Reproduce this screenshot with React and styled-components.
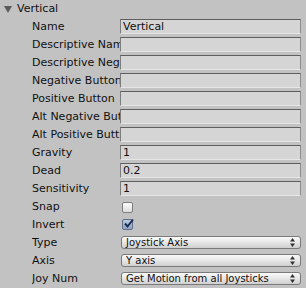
import React from "react";
import styled, { createGlobalStyle } from "styled-components";

const GlobalStyle = createGlobalStyle`
  body {
    margin: 0;
    background: #c2c2c2;
    font-family: "DejaVu Sans", Verdana, sans-serif;
    font-size: 11px;
    color: #111;
  }
`;

const Panel = styled.div`
  width: 306px;
  height: 288px;
  overflow: hidden;
  background: #c2c2c2;
`;

const Header = styled.div`
  display: flex;
  align-items: center;
  height: 18px;
  padding-left: 4px;
  gap: 5px;
`;

const Foldout = styled.span`
  width: 0;
  height: 0;
  border-left: 4px solid transparent;
  border-right: 4px solid transparent;
  border-top: 7px solid #5a5a5a;
  margin-top: 1px;
`;

const Title = styled.span`
  line-height: 18px;
`;

const Row = styled.div`
  display: flex;
  align-items: flex-start;
  height: 18px;
`;

const Label = styled.div`
  width: 88px;
  margin-left: 32px;
  line-height: 17px;
  white-space: nowrap;
  overflow: hidden;
`;

const TextField = styled.div`
  box-sizing: border-box;
  width: 181px;
  height: 15px;
  margin-top: 1px;
  padding-left: 2px;
  background: #d5d5d5;
  border-top: 1px solid #5e5e5e;
  border-left: 1px solid #7c7c7c;
  border-right: 1px solid #8e8e8e;
  border-bottom: 1px solid #e6e6e6;
  line-height: 13px;
  white-space: nowrap;
  overflow: hidden;
`;

const CheckBox = styled.div`
  box-sizing: border-box;
  width: 11px;
  height: 11px;
  margin: ${(p) => (p.$checked ? "3px" : "4px")} 0 0 2px;
  border: 1px solid ${(p) => (p.$checked ? "#5d6f8c" : "#7d7d7d")};
  border-radius: 2px;
  background: ${(p) =>
    p.$checked
      ? "linear-gradient(#b9c9e0, #8ea4c4)"
      : "linear-gradient(#fbfbfb, #dcdcdc)"};
  position: relative;
  svg {
    position: absolute;
    left: 0;
    top: -2px;
  }
`;

const Popup = styled.div`
  box-sizing: border-box;
  display: flex;
  align-items: center;
  justify-content: space-between;
  width: 180px;
  height: 13px;
  margin: 2px 0 0 1px;
  padding: 0 5px 0 4px;
  border: 1px solid #7a7a7a;
  border-radius: 3px;
  background: linear-gradient(#fafafa, #e4e4e4 55%, #cfcfcf);
  font-size: 10px;
  line-height: 11px;
  white-space: nowrap;
`;

const Arrows = styled.svg`
  flex: none;
`;

const fields = [
  ["Name", "Vertical"],
  ["Descriptive Name", ""],
  ["Descriptive Negative Name", ""],
  ["Negative Button", ""],
  ["Positive Button", ""],
  ["Alt Negative Button", ""],
  ["Alt Positive Button", ""],
  ["Gravity", "1"],
  ["Dead", "0.2"],
  ["Sensitivity", "1"],
];

const popups = [
  ["Type", "Joystick Axis"],
  ["Axis", "Y axis"],
  ["Joy Num", "Get Motion from all Joysticks"],
];

export default function App() {
  return (
    <Panel>
      <GlobalStyle />
      <Header>
        <Foldout />
        <Title>Vertical</Title>
      </Header>
      {fields.map(([label, value]) => (
        <Row key={label}>
          <Label>{label}</Label>
          <TextField>{value}</TextField>
        </Row>
      ))}
      <Row>
        <Label>Snap</Label>
        <CheckBox />
      </Row>
      <Row>
        <Label>Invert</Label>
        <CheckBox $checked>
          <svg width="11" height="11" viewBox="0 0 11 11">
            <path d="M2 5.5 L4.5 8.5 L10 1.5" fill="none" stroke="#1c2c50" strokeWidth="2" />
          </svg>
        </CheckBox>
      </Row>
      {popups.map(([label, value]) => (
        <Row key={label}>
          <Label>{label}</Label>
          <Popup>
            <span>{value}</span>
            <Arrows width="5" height="9" viewBox="0 0 5 9">
              <path d="M2.5 0 L5 3.5 H0 Z M2.5 9 L5 5.5 H0 Z" fill="#333" />
            </Arrows>
          </Popup>
        </Row>
      ))}
    </Panel>
  );
}
